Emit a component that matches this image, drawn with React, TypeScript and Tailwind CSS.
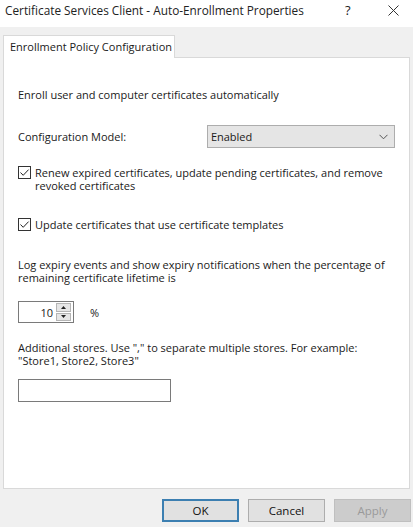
import React from "react";

const font = { fontFamily: '"Open Sans", "Noto Sans", sans-serif' };

const CheckBox: React.FC = () => (
  <div className="w-[13px] h-[13px] border border-[#333333] bg-white flex items-center justify-center shrink-0 mt-[1px]">
    <svg width="11" height="11" viewBox="0 0 11 11">
      <path d="M1.5 5.5 L4.2 8.3 L9.6 2.6" fill="none" stroke="#222222" strokeWidth="1" />
    </svg>
  </div>
);

const Button: React.FC<{ label: string; primary?: boolean; disabled?: boolean }> = ({
  label,
  primary,
  disabled
}) => (
  <div
    className={`w-[77px] h-[23px] flex items-center justify-center text-[11.5px] ${
      disabled
        ? "bg-[#cccccc] border border-[#bfbfbf] text-[#9a9a9a]"
        : primary
        ? "bg-[#e1e1e1] border-2 border-[#3c7fb1] text-[#111111]"
        : "bg-[#e1e1e1] border border-[#adadad] text-[#111111]"
    }`}
  >
    {label}
  </div>
);

export default function App() {
  return (
    <div
      className="w-[413px] h-[527px] bg-[#f0f0f0] flex flex-col text-[#1a1a1a] overflow-hidden"
      style={font}
    >
      {/* title bar */}
      <div className="h-[27px] bg-white flex items-center pl-[5px] shrink-0">
        <span className="w-[340px] text-[11.8px] text-[#222222] pb-[6px] whitespace-nowrap">
          Certificate Services Client - Auto-Enrollment Properties
        </span>
        <span className="w-[10px] text-[13px] text-[#222222] pb-[6px]">?</span>
        <svg width="11" height="11" viewBox="0 0 11 11" className="ml-[33px] mb-[6px]">
          <path d="M0.5 0.5 L10.5 10.5 M10.5 0.5 L0.5 10.5" stroke="#333333" strokeWidth="1" />
        </svg>
      </div>

      {/* tabs + panel */}
      <div className="px-[3px] pt-[8px] flex flex-col">
        <div className="flex">
          <div className="w-[172px] h-[23px] bg-white border border-b-0 border-[#d9d9d9] flex items-center pl-[6px] text-[11px] -mb-[1px] relative z-10">
            Enrollment Policy Configuration
          </div>
        </div>
        <div className="h-[432px] bg-white border border-[#d9d9d9] w-[407px] pt-[30px] px-[14px] text-[11px] leading-[13px]">
          <div>Enroll user and computer certificates automatically</div>

          <div className="flex items-center mt-[24px]">
            <div className="w-[193px]">Configuration Model:</div>
            <div className="w-[192px] h-[23px] bg-[#e5e5e5] border border-[#adadad] flex items-center pl-[3px] pr-[6px]">
              <span>Enabled</span>
              <svg width="9" height="6" viewBox="0 0 9 6" className="ml-auto">
                <path d="M0.5 0.8 L4.5 4.8 L8.5 0.8" fill="none" stroke="#555555" strokeWidth="1" />
              </svg>
            </div>
          </div>

          <div className="flex gap-[4px] mt-[17px]">
            <CheckBox />
            <div className="pt-[1px]">
              Renew expired certificates, update pending certificates, and remove
              <br />
              revoked certificates
            </div>
          </div>

          <div className="flex gap-[4px] mt-[25px] items-center">
            <CheckBox />
            <div>Update certificates that use certificate templates</div>
          </div>

          <div className="mt-[27px]">
            Log expiry events and show expiry notifications when the percentage of
            <br />
            remaining certificate lifetime is
          </div>

          <div className="flex items-center mt-[17px]">
            <div className="w-[56px] h-[22px] border border-[#7a7a7a] bg-white flex items-center">
              <span className="w-[37px] text-right pr-[3px]">10</span>
              <div className="w-[15px] h-[18px] flex flex-col gap-[1px]">
                <div className="flex-1 bg-[#e6e6e6] border border-[#b5b5b5] flex items-center justify-center">
                  <svg width="5" height="3" viewBox="0 0 5 3">
                    <path d="M0 3 L2.5 0 L5 3 Z" fill="#222222" />
                  </svg>
                </div>
                <div className="flex-1 bg-[#e6e6e6] border border-[#b5b5b5] flex items-center justify-center">
                  <svg width="5" height="3" viewBox="0 0 5 3">
                    <path d="M0 0 L2.5 3 L5 0 Z" fill="#222222" />
                  </svg>
                </div>
              </div>
            </div>
            <span className="ml-[16px]">%</span>
          </div>

          <div className="mt-[18px]">
            Additional stores. Use &quot;,&quot; to separate multiple stores. For example:
            <br />
            &quot;Store1, Store2, Store3&quot;
          </div>

          <div className="mt-[12px] w-[153px] h-[23px] border border-[#7a7a7a] bg-white" />
        </div>
      </div>

      {/* buttons */}
      <div className="flex justify-end gap-[9px] pr-[2px] mt-[10px]">
        <Button label="OK" primary />
        <Button label="Cancel" />
        <Button label="Apply" disabled />
      </div>
    </div>
  );
}
